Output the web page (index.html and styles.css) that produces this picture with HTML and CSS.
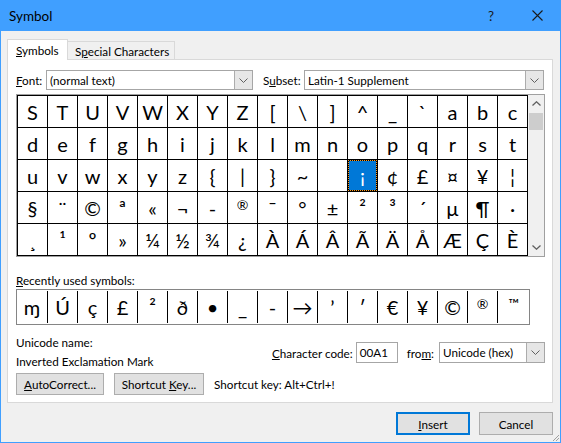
FILE: index.html
```html
<!DOCTYPE html>
<html>
<head>
<meta charset="utf-8">
<title>Symbol</title>
<link rel="stylesheet" href="styles.css">
</head>
<body>
<div class="window">
  <div class="titlebar">
    <span class="title">Symbol</span>
    <span class="help">?</span>
    <svg class="close" width="11" height="11" viewBox="0 0 11 11"><path d="M0.5 0.5 L10.5 10.5 M10.5 0.5 L0.5 10.5" stroke="#1a1a1a" stroke-width="1.1" fill="none"/></svg>
  </div>
  <div class="body">
    <div class="tabs">
      <div class="tab active"><u>S</u>ymbols</div>
      <div class="tab inactive">S<u>p</u>ecial Characters</div>
    </div>
    <div class="panel">
      <div class="fontrow">
        <span class="lbl font-lbl"><u>F</u>ont:</span>
        <div class="combo font-combo"><span class="val">(normal text)</span><span class="drop"><svg width="9" height="5" viewBox="0 0 9 5"><path d="M0.5 0.5 L4.5 4.5 L8.5 0.5" stroke="#606060" fill="none"/></svg></span></div>
        <span class="lbl subset-lbl">S<u>u</u>bset:</span>
        <div class="combo subset-combo"><span class="val">Latin-1 Supplement</span><span class="drop"><svg width="9" height="5" viewBox="0 0 9 5"><path d="M0.5 0.5 L4.5 4.5 L8.5 0.5" stroke="#606060" fill="none"/></svg></span></div>
      </div>
      <div class="gridbox">
        <div class="charmap">
          <span class="cell">S</span><span class="cell">T</span><span class="cell">U</span><span class="cell">V</span><span class="cell">W</span><span class="cell">X</span><span class="cell">Y</span><span class="cell">Z</span><span class="cell">[</span><span class="cell">\</span><span class="cell">]</span><span class="cell">^</span><span class="cell">_</span><span class="cell">`</span><span class="cell">a</span><span class="cell">b</span><span class="cell">c</span>
          <span class="cell">d</span><span class="cell">e</span><span class="cell">f</span><span class="cell">g</span><span class="cell">h</span><span class="cell">i</span><span class="cell">j</span><span class="cell">k</span><span class="cell">l</span><span class="cell">m</span><span class="cell">n</span><span class="cell">o</span><span class="cell">p</span><span class="cell">q</span><span class="cell">r</span><span class="cell">s</span><span class="cell">t</span>
          <span class="cell">u</span><span class="cell">v</span><span class="cell">w</span><span class="cell">x</span><span class="cell">y</span><span class="cell">z</span><span class="cell">{</span><span class="cell">|</span><span class="cell">}</span><span class="cell">~</span><span class="cell"></span><span class="cell selected"><span class="sel-in">¡</span></span><span class="cell">¢</span><span class="cell">£</span><span class="cell">¤</span><span class="cell">¥</span><span class="cell">¦</span>
          <span class="cell">§</span><span class="cell">¨</span><span class="cell">©</span><span class="cell">ª</span><span class="cell">«</span><span class="cell">¬</span><span class="cell">-</span><span class="cell small">®</span><span class="cell">¯</span><span class="cell">°</span><span class="cell">±</span><span class="cell">²</span><span class="cell">³</span><span class="cell">´</span><span class="cell">µ</span><span class="cell">¶</span><span class="cell">·</span>
          <span class="cell">¸</span><span class="cell">¹</span><span class="cell">º</span><span class="cell">»</span><span class="cell">¼</span><span class="cell">½</span><span class="cell">¾</span><span class="cell">¿</span><span class="cell">À</span><span class="cell">Á</span><span class="cell">Â</span><span class="cell">Ã</span><span class="cell">Ä</span><span class="cell">Å</span><span class="cell">Æ</span><span class="cell">Ç</span><span class="cell">È</span>
        </div>
        <div class="scrollbar">
          <span class="sb-btn"><svg width="9" height="5" viewBox="0 0 9 5"><path d="M0.5 4.5 L4.5 0.8 L8.5 4.5" stroke="#606060" stroke-width="1.3" fill="none"/></svg></span>
          <span class="thumb"></span>
          <span class="track"></span>
          <span class="sb-btn"><svg width="9" height="5" viewBox="0 0 9 5"><path d="M0.5 0.5 L4.5 4.2 L8.5 0.5" stroke="#606060" stroke-width="1.3" fill="none"/></svg></span>
        </div>
      </div>
      <div class="recent-lbl"><u>R</u>ecently used symbols:</div>
      <div class="recent">
        <span class="rc">ɱ</span><span class="rc">Ú</span><span class="rc">ç</span><span class="rc">£</span><span class="rc">²</span><span class="rc">ð</span><span class="rc">•</span><span class="rc">_</span><span class="rc">-</span><span class="rc">→</span><span class="rc">’</span><span class="rc">′</span><span class="rc">€</span><span class="rc">¥</span><span class="rc">©</span><span class="rc small">®</span><span class="rc small">™</span>
      </div>
      <div class="info">
        <div class="names">
          <div class="line">Unicode name:</div>
          <div class="line">Inverted Exclamation Mark</div>
        </div>
        <div class="code">
          <span class="lbl"><u>C</u>haracter code:</span>
          <div class="textbox">00A1</div>
          <span class="lbl from-lbl">fro<u>m</u>:</span>
          <div class="combo from-combo"><span class="val">Unicode (hex)</span><span class="drop"><svg width="9" height="5" viewBox="0 0 9 5"><path d="M0.5 0.5 L4.5 4.5 L8.5 0.5" stroke="#606060" fill="none"/></svg></span></div>
        </div>
      </div>
      <div class="actions">
        <button class="btn autocorrect"><u>A</u>utoCorrect...</button>
        <button class="btn shortcut">Shortcut <u>K</u>ey...</button>
        <span class="shortcut-text">Shortcut key: Alt+Ctrl+!</span>
      </div>
    </div>
    <div class="footer">
      <button class="btn default"><u>I</u>nsert</button>
      <button class="btn">Cancel</button>
    </div>
  </div>
  <svg class="grip" width="9" height="9" viewBox="0 0 9 9"><path d="M8 2 L2 8 M8 5 L5 8 M8 8 L8 8" stroke="#a0a0a0" stroke-width="1" fill="none"/></svg>
</div>
</body>
</html>
```
FILE: styles.css
```css
* { box-sizing: border-box; }
html, body { margin: 0; padding: 0; }
body {
  font-family: Lato, "Liberation Sans", sans-serif;
  font-size: 11.7px;
  color: #000;
  background: #fff;
}
u { text-decoration: underline; text-underline-offset: 1px; }

.window {
  width: 561px;
  height: 443px;
  border: 1px solid #409fff;
  border-top: 0;
  background: #f0f0f0;
  position: relative;
  overflow: hidden;
}

.titlebar {
  height: 31px;
  background: #409fff;
  display: flex;
  align-items: center;
  padding-left: 8px;
}
.title { flex: 1; font-size: 13.5px; color: #000; }
.help { font-size: 13.5px; width: 8px; margin-right: 36px; color: #1a1a1a; }
.close { margin-right: 17px; }

.body { padding: 8px 7px 0 6px; }

.tabs {
  display: flex;
  align-items: flex-end;
  height: 21px;
  margin-bottom: -1px;
  position: relative;
  z-index: 1;
}
.tab {
  border: 1px solid #d9d9d9;
  border-bottom: 0;
  line-height: 15px;
  white-space: nowrap;
}
.tab.active {
  height: 21px;
  width: 61px;
  background: #fff;
  padding: 3px 0 0 8px;
}
.tab.inactive {
  height: 18px;
  width: 107px;
  margin-bottom: 1px;
  border-left: 0;
  background: #f0f0f0;
  padding: 2px 0 0 7px;
}

.panel {
  height: 344px;
  background: #fff;
  border: 1px solid #d9d9d9;
  padding: 10px 7px 0 8px;
}

.fontrow {
  display: flex;
  align-items: center;
  height: 20px;
}
.lbl { white-space: nowrap; }
.font-lbl { width: 30px; }
.subset-lbl { width: 41px; margin-left: 10px; }

.combo {
  display: flex;
  align-items: stretch;
  height: 20px;
  background: #fff;
  border: 1px solid #a6a6a6;
}
.combo .val { flex: 1; padding-left: 3px; line-height: 18px; white-space: nowrap; }
.combo .drop {
  width: 18px;
  background: #e6e6e6;
  border-left: 1px solid #acacac;
  display: flex;
  align-items: center;
  justify-content: center;
}
.font-combo { width: 207px; }
.subset-combo { width: 240px; }

.gridbox {
  margin-top: 4px;
  display: flex;
  border: 1px solid #a0a0a0;
  width: 529px;
}
.charmap {
  display: grid;
  grid-template-columns: repeat(17, 29px);
  grid-auto-rows: 31px;
  gap: 1px;
  padding: 1px;
  background: #000;
}
.cell {
  background: #fff;
  font-family: Lato, "DejaVu Sans", sans-serif;
  font-size: 20px;
  line-height: 31px;
  padding-top: 1px;
  text-align: center;
  overflow: hidden;
}
.cell.small { font-size: 14px; line-height: 24px; }
.cell.selected {
  padding: 1px;
  background: repeating-conic-gradient(#000 0 25%, #ff9a1a 0 50%) 0 0 / 2px 2px;
}
.sel-in {
  display: block;
  height: 100%;
  background: #0078d7;
  color: #fff;
  line-height: 29px;
}

.scrollbar {
  width: 16px;
  background: #f0f0f0;
  display: flex;
  flex-direction: column;
}
.sb-btn {
  height: 17px;
  display: flex;
  align-items: center;
  justify-content: center;
}
.thumb {
  height: 17px;
  margin: 1px 1px 0 1px;
  background: #cdcdcd;
}
.track { flex: 1; }

.recent-lbl {
  margin-top: 15px;
  height: 17px;
  line-height: 17px;
}
.recent {
  display: flex;
  width: 514px;
  height: 36px;
  border: 1px solid #858585;
  padding: 1px 0 1px 0;
}
.rc {
  width: 30px;
  border-right: 1px solid #000;
  font-family: Lato, "DejaVu Sans", sans-serif;
  font-size: 20px;
  line-height: 32px;
  text-align: center;
  overflow: hidden;
}
.rc:first-child { width: 31px; }
.rc:last-child { flex: 1; border-right: 0; }
.rc.small { font-size: 14px; line-height: 26px; }

.info {
  display: flex;
  margin-top: 8px;
  height: 37px;
}
.names { flex: 1; }
.names .line { line-height: 19px; height: 19px; white-space: nowrap; }
.code {
  display: flex;
  align-items: center;
  margin-top: 9px;
  height: 21px;
}
.textbox {
  width: 42px;
  height: 21px;
  margin-left: 3px;
  border: 1px solid #a6a6a6;
  background: #fff;
  padding-left: 3px;
  line-height: 19px;
}
.from-lbl { margin-left: 9px; margin-right: 5px; }
.from-combo { width: 106px; height: 21px; }
.from-combo .val { line-height: 19px; }

.actions {
  display: flex;
  align-items: center;
  margin-top: 3px;
}
.btn {
  font-family: Lato, "Liberation Sans", sans-serif;
  font-size: 11.7px;
  color: #000;
  background: #e1e1e1;
  border: 1px solid #adadad;
  height: 22px;
  padding: 0;
  text-align: center;
}
.autocorrect { width: 88px; }
.shortcut { width: 90px; margin-left: 10px; }
.shortcut-text { margin-left: 10px; }

.footer {
  display: flex;
  justify-content: flex-end;
  gap: 9px;
  margin-top: 9px;
}
.footer .btn { width: 74px; height: 23px; }
.footer .btn.default { border: 2px solid #0078d7; }

.grip { position: absolute; right: 0; bottom: 0; }
```
